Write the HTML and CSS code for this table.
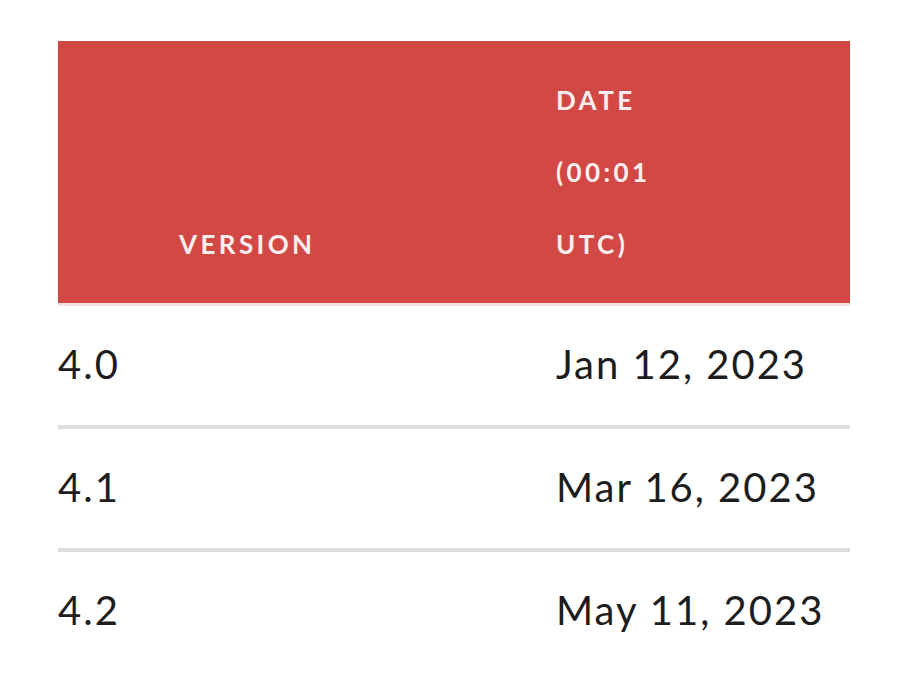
FILE: index.html
```html
<!DOCTYPE html>
<html>
<head>
<meta charset="utf-8">
<link rel="stylesheet" href="styles.css">
</head>
<body>
<div class="page">
  <table class="versions">
    <thead>
      <tr>
        <th class="col-version">VERSION</th>
        <th class="col-date">DATE<br>(00:01<br>UTC)</th>
      </tr>
    </thead>
    <tbody>
      <tr><td class="col-version">4.0</td><td class="col-date">Jan 12, 2023</td></tr>
      <tr><td class="col-version">4.1</td><td class="col-date">Mar 16, 2023</td></tr>
      <tr><td class="col-version">4.2</td><td class="col-date">May 11, 2023</td></tr>
    </tbody>
  </table>
</div>
</body>
</html>
```
FILE: styles.css
```css
html, body {
  margin: 0;
  padding: 0;
  background: #ffffff;
}
.page {
  padding: 41px 55px 0 58px;
  font-family: "Lato", "Liberation Sans", sans-serif;
}
.versions {
  width: 792px;
  border-collapse: collapse;
  table-layout: fixed;
}
.versions thead tr {
  background: #d24845;
  border-bottom: 3px solid #f3e1e0;
}
.versions th {
  color: #fbeeee;
  font-weight: 700;
  font-size: 26px;
  letter-spacing: 3.4px;
  line-height: 72px;
  text-align: left;
  vertical-align: bottom;
  padding: 23px 0 23px 0;
}
.versions th.col-version {
  width: 498px;
  padding-left: 121px;
  box-sizing: border-box;
}
.versions td {
  color: #1d1d1d;
  font-size: 40px;
  font-weight: 400;
  letter-spacing: 2px;
  height: 116px;
  padding: 0 0 3px 0;
  vertical-align: middle;
}
.versions tbody tr + tr {
  border-top: 4px solid #dedede;
}
```
